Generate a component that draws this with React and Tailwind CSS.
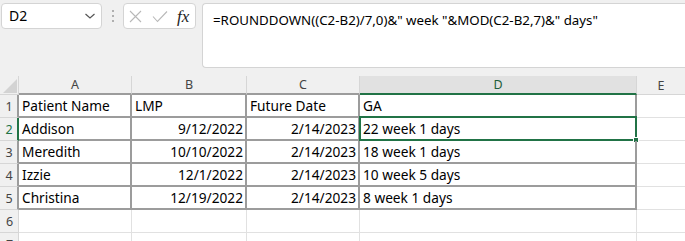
import React from "react";

const FONT = { fontFamily: '"Noto Sans", "Open Sans", sans-serif' };

const rows = [
  ["Patient Name", "LMP", "Future Date", "GA"],
  ["Addison", "9/12/2022", "2/14/2023", "22 week 1 days"],
  ["Meredith", "10/10/2022", "2/14/2023", "18 week 1 days"],
  ["Izzie", "12/1/2022", "2/14/2023", "10 week 5 days"],
  ["Christina", "12/19/2022", "2/14/2023", "8 week 1 days"],
  ["", "", "", ""],
  ["", "", "", ""],
];

function TopBar() {
  return (
    <div className="flex items-start h-[76px] pt-[3px] pl-[1px] bg-[#f0f0f0]">
      <div className="w-[101px] h-[26px] bg-white border border-[#d4d4d4] rounded-[4px] flex items-center justify-between pl-[7px] pr-[5px]">
        <span className="text-[14px] text-black leading-none">D2</span>
        <svg width="12" height="8" viewBox="0 0 12 8" fill="none">
          <path d="M1.5 2 L6 6 L10.5 2" stroke="#555" strokeWidth="1.2" />
        </svg>
      </div>
      <div className="w-[21px] h-[26px] flex flex-col items-center justify-center gap-[3px]">
        <div className="w-[2px] h-[2px] bg-[#9a9a9a] rounded-full" />
        <div className="w-[2px] h-[2px] bg-[#9a9a9a] rounded-full" />
        <div className="w-[2px] h-[2px] bg-[#9a9a9a] rounded-full" />
      </div>
      <div className="w-[73px] h-[26px] bg-white border border-[#d4d4d4] rounded-[4px] flex items-center pl-[5px] pr-[3px]">
        <svg width="13" height="13" viewBox="0 0 13 13" fill="none">
          <path d="M1 1 L12 12 M12 1 L1 12" stroke="#b8b8b8" strokeWidth="1.1" />
        </svg>
        <svg width="16" height="13" viewBox="0 0 16 13" fill="none" className="ml-[10px]">
          <path d="M1 6.5 L5.5 11.5 L15 1.5" stroke="#b8b8b8" strokeWidth="1.1" />
        </svg>
        <span
          className="ml-[9px] text-[17px] italic text-[#222] leading-none"
          style={{ fontFamily: '"Liberation Serif", "DejaVu Serif", serif' }}
        >
          fx
        </span>
      </div>
      <div className="ml-[6px] flex-1 h-[65px] bg-white border border-[#d4d4d4] border-r-0 rounded-l-[4px] pl-[10px] pt-[3px]">
        <span className="text-[13.3px] text-black whitespace-nowrap leading-none">
          =ROUNDDOWN((C2-B2)/7,0)&amp;" week "&amp;MOD(C2-B2,7)&amp;" days"
        </span>
      </div>
    </div>
  );
}

function Sheet() {
  const colLetters = ["A", "B", "C", "D", "E"];
  const GRAY = "border-[#9c9c9c]";
  return (
    <div
      className="grid bg-white"
      style={{ gridTemplateColumns: "19px 113px 115px 113px 277px 1fr", gridTemplateRows: "19px repeat(7, 23px)" }}
    >
      <div className="bg-[#f0f0f0] border-r border-b border-[#d6d6d6] relative flex items-end justify-end pr-[1px] pb-[1px]">
        <svg width="14" height="14" viewBox="0 0 14 14">
          <path d="M14 0 L14 14 L0 14 Z" fill="#d3d3d3" />
        </svg>
      </div>
      {colLetters.map((l, i) => {
        const isD = l === "D";
        const inTable = i < 4;
        return (
          <div
            key={l}
            className={
              "flex items-center justify-center text-[12.5px] leading-none " +
              (isD ? "bg-[#e1e1e1] text-[#1e5e3b] " : "bg-[#f0f0f0] text-[#444] ") +
              (i < 4 ? "border-r border-[#d6d6d6] " : "") +
              (isD
                ? "border-b-2 !border-b-[#217346]"
                : inTable
                ? "border-b-2 !border-b-[#9c9c9c]"
                : "border-b border-b-[#d6d6d6]")
            }
          >
            <span className="pt-[2px]">{l}</span>
          </div>
        );
      })}
      {rows.map((r, ri) => {
        const rowNum = ri + 1;
        const inTable = ri < 5;
        const active = rowNum === 2;
        return (
          <React.Fragment key={ri}>
            <div
              className={
                "bg-[#f0f0f0] flex items-center justify-center text-[12.5px] leading-none border-b border-b-[#d6d6d6] " +
                (active
                  ? "text-[#217346] border-r-2 border-r-[#217346]"
                  : inTable
                  ? "text-[#444] border-r-2 border-r-[#9c9c9c]"
                  : "text-[#444] border-r border-r-[#d6d6d6]")
              }
            >
              <span className="pt-[3px] pl-[1px]">{rowNum}</span>
            </div>
            {r.map((v, ci) => {
              const right = ri >= 1 && (ci === 1 || ci === 2);
              const selected = rowNum === 2 && ci === 3;
              return (
                <div
                  key={ci}
                  className={
                    "relative flex items-end pb-[1px] text-[13.7px] leading-none text-black whitespace-nowrap overflow-visible " +
                    (right ? "justify-end pr-[2px] " : "pl-[3px] ") +
                    (inTable
                      ? "border-r-2 border-b-2 " + GRAY
                      : "border-r border-b border-[#e1e1e1]")
                  }
                >
                  <span className="pb-[2px]">{v}</span>
                  {selected && (
                    <div className="absolute left-[-1px] top-[-2px] right-[-2px] bottom-[-2px] border-2 border-[#217346] pointer-events-none">
                      <div className="absolute right-[-4px] bottom-[-4px] w-[6px] h-[6px] bg-[#217346] border border-white" />
                    </div>
                  )}
                </div>
              );
            })}
            <div className="border-b border-[#e1e1e1]" />
          </React.Fragment>
        );
      })}
    </div>
  );
}

export default function App() {
  return (
    <div className="w-[685px] h-[241px] overflow-hidden bg-[#f0f0f0]" style={FONT}>
      <TopBar />
      <Sheet />
    </div>
  );
}
